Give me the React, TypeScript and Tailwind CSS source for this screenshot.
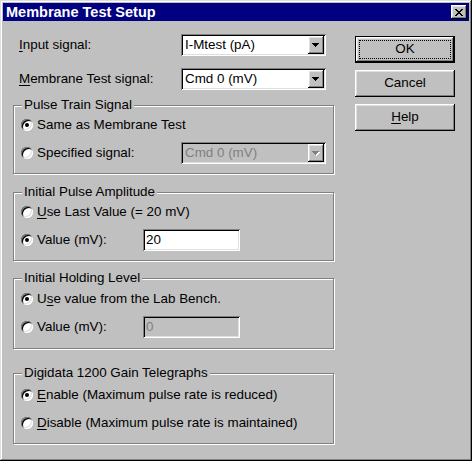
import React from 'react';

const raised = 'shadow-[inset_-1px_-1px_#000,inset_1px_1px_#fff,inset_-2px_-2px_#808080,inset_2px_2px_#dfdfdf]';
const sunken = 'shadow-[inset_1px_1px_#808080,inset_-1px_-1px_#fff,inset_2px_2px_#000,inset_-2px_-2px_#dfdfdf]';

function Arrow({ disabled }: { disabled?: boolean }) {
  return (
    <svg width="8" height="5" viewBox="0 0 8 5" shapeRendering="crispEdges">
      {disabled && (
        <g fill="#fff">
          <rect x="1" y="1" width="7" height="1" />
          <rect x="2" y="2" width="5" height="1" />
          <rect x="3" y="3" width="3" height="1" />
          <rect x="4" y="4" width="1" height="1" />
        </g>
      )}
      <g fill={disabled ? '#808080' : '#000'}>
        <rect x="0" y="0" width="7" height="1" />
        <rect x="1" y="1" width="5" height="1" />
        <rect x="2" y="2" width="3" height="1" />
        <rect x="3" y="3" width="1" height="1" />
      </g>
    </svg>
  );
}

function Combo({ value, disabled }: { value: string; disabled?: boolean }) {
  return (
    <div className={`w-[145px] h-[22px] p-[2px] flex items-stretch ${sunken} ${disabled ? 'bg-[#c0c0c0]' : 'bg-white'}`}>
      <span className={`flex-1 pl-[2px] leading-[18px] ${disabled ? 'text-[#808080]' : 'text-black'}`}>{value}</span>
      <span className={`w-[16px] flex items-center justify-center bg-[#c0c0c0] ${raised}`}>
        <Arrow disabled={disabled} />
      </span>
    </div>
  );
}

function Field({ value, disabled }: { value: string; disabled?: boolean }) {
  return (
    <div className={`w-[97px] h-[22px] p-[2px] ${sunken} ${disabled ? 'bg-[#c0c0c0] text-[#808080]' : 'bg-white text-black'}`}>
      <span className="block pl-[1px] leading-[18px]">{value}</span>
    </div>
  );
}

function Radio({ checked }: { checked?: boolean }) {
  return (
    <span className="w-[12px] h-[12px] shrink-0 rounded-full bg-white flex items-center justify-center shadow-[inset_1px_1px_#808080,inset_-1px_-1px_#fff,inset_2px_2px_#000,inset_-2px_-2px_#dfdfdf]">
      {checked && <span className="w-[4px] h-[4px] rounded-full bg-black" />}
    </span>
  );
}

function Group({ title, className, children }: { title: string; className: string; children: React.ReactNode }) {
  return (
    <fieldset className={`border border-[#808080] shadow-[inset_1px_1px_#fff,1px_1px_#fff] ${className}`}>
      <legend className="ml-[8px] px-[2px] leading-[16px] bg-[#c0c0c0]">{title}</legend>
      {children}
    </fieldset>
  );
}

function Row({ checked, children }: { checked?: boolean; children: React.ReactNode }) {
  return (
    <div className="h-[28px] flex items-center pl-[7px]">
      <Radio checked={checked} />
      {children}
    </div>
  );
}

function Button({ label, isDefault }: { label: React.ReactNode; isDefault?: boolean }) {
  if (isDefault) {
    return (
      <div className="w-[100px] h-[27px] border border-black">
        <div className={`w-full h-full p-[3px] bg-[#c0c0c0] ${raised}`}>
          <div className="w-full h-full border border-dotted border-black flex items-center justify-center">{label}</div>
        </div>
      </div>
    );
  }
  return (
    <div className={`w-[100px] h-[27px] flex items-center justify-center bg-[#c0c0c0] ${raised}`}>{label}</div>
  );
}

export default function App() {
  return (
    <div className={`w-[472px] h-[461px] bg-[#c0c0c0] p-[3px] font-['Liberation_Sans',Arial,sans-serif] text-[13.4px] text-black shadow-[inset_-1px_-1px_#000,inset_1px_1px_#dfdfdf,inset_-2px_-2px_#808080,inset_2px_2px_#fff]`}>
      {/* Title bar */}
      <div className="h-[18px] bg-[#000080] flex items-center justify-between">
        <span className="pl-[3px] text-white font-bold text-[14.5px] leading-[18px]">Membrane Test Setup</span>
        <span className={`w-[16px] h-[14px] mr-[2px] bg-[#c0c0c0] flex items-center justify-center ${raised}`}>
          <svg width="8" height="7" viewBox="0 0 8 7" shapeRendering="crispEdges">
            <path d="M0 0h2v1h-2zM6 0h2v1h-2zM1 1h2v1h-2zM5 1h2v1h-2zM2 2h4v1h-4zM3 3h2v1h-2zM2 4h4v1h-4zM1 5h2v1h-2zM5 5h2v1h-2zM0 6h2v1h-2zM6 6h2v1h-2z" fill="#000" />
          </svg>
        </span>
      </div>

      <div className="flex pt-[13px] pl-[10px]">
        {/* Left column */}
        <div className="w-[321px]">
          <div className="h-[22px] flex items-center">
            <span className="ml-[6px] w-[162px]"><span className="underline underline-offset-[2px]">I</span>nput signal:</span>
            <Combo value="I-Mtest (pA)" />
          </div>
          <div className="h-[22px] mt-[12px] flex items-center">
            <span className="ml-[6px] w-[162px]"><span className="underline underline-offset-[2px]">M</span>embrane Test signal:</span>
            <Combo value="Cmd 0 (mV)" />
          </div>

          <Group title="Pulse Train Signal" className="h-[77px] mt-[7px]">
            <div className="-mt-[2px]">
              <Row checked>
                <span className="ml-[4px]">Same as Membrane Test</span>
              </Row>
              <Row>
                <span className="ml-[4px] w-[144px]">Specified signal:</span>
                <Combo value="Cmd 0 (mV)" disabled />
              </Row>
            </div>
          </Group>

          <Group title="Initial Pulse Amplitude" className="h-[77px] mt-[10px]">
            <div className="-mt-[2px]">
              <Row>
                <span className="ml-[4px]"><span className="underline underline-offset-[2px]">U</span>se Last Value (= 20 mV)</span>
              </Row>
              <Row checked>
                <span className="ml-[4px] w-[106px]">Value (mV):</span>
                <Field value="20" />
              </Row>
            </div>
          </Group>

          <Group title="Initial Holding Level" className="h-[79px] mt-[9px]">
            <div className="-mt-[1px]">
              <Row checked>
                <span className="ml-[4px]">U<span className="underline underline-offset-[2px]">s</span>e value from the Lab Bench.</span>
              </Row>
              <Row>
                <span className="ml-[4px] w-[106px]">Value (mV):</span>
                <Field value="0" disabled />
              </Row>
            </div>
          </Group>

          <Group title="Digidata 1200 Gain Telegraphs" className="h-[79px] mt-[16px]">
            <div>
              <Row checked>
                <span className="ml-[4px]"><span className="underline underline-offset-[2px]">E</span>nable (Maximum pulse rate is reduced)</span>
              </Row>
              <Row>
                <span className="ml-[4px]"><span className="underline underline-offset-[2px]">D</span>isable (Maximum pulse rate is maintained)</span>
              </Row>
            </div>
          </Group>
        </div>

        {/* Right column */}
        <div className="ml-[21px] mt-[2px] flex flex-col gap-[7px]">
          <Button label="OK" isDefault />
          <Button label="Cancel" />
          <Button label={<span><span className="underline underline-offset-[2px]">H</span>elp</span>} />
        </div>
      </div>
    </div>
  );
}
